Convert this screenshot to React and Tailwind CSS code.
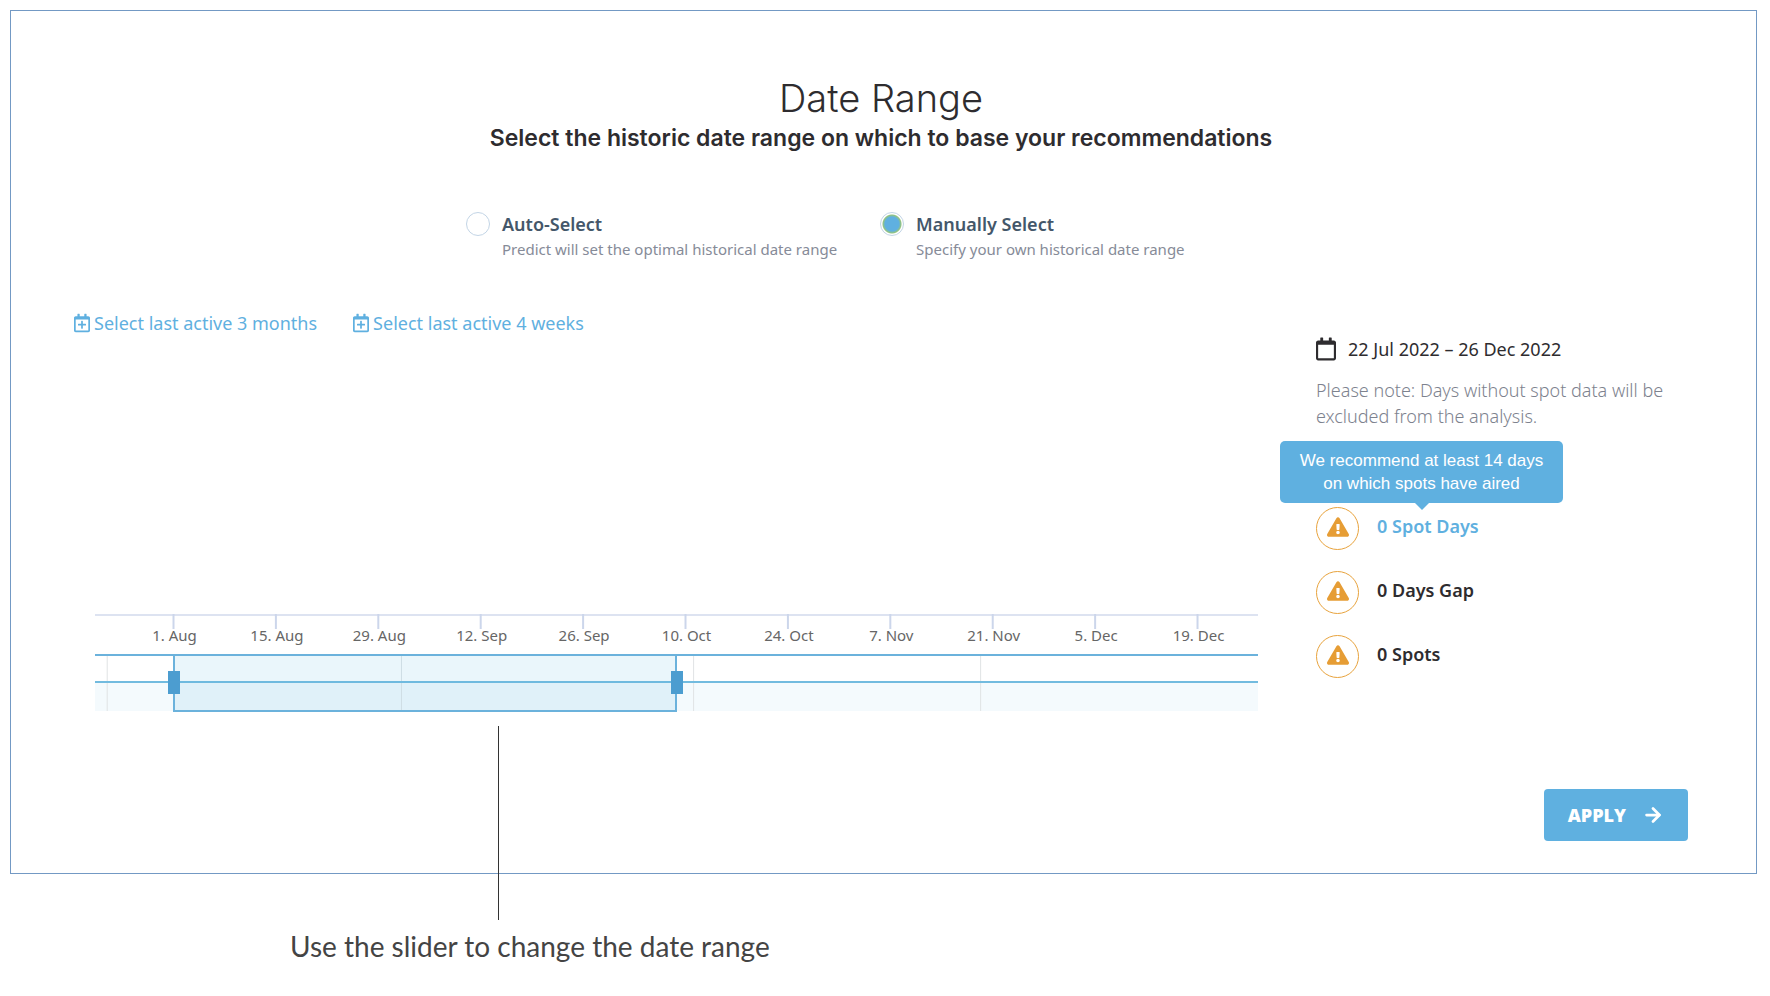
import React, { useState } from 'react';
import { ArrowRight } from 'lucide-react';
import { FaExclamationTriangle, FaRegCalendar, FaRegCalendarPlus } from 'react-icons/fa';

const MODES = [
  { id: 'auto', title: 'Auto-Select', text: 'Predict will set the optimal historical date range' },
  { id: 'manual', title: 'Manually Select', text: 'Specify your own historical date range' },
];

const TICKS = ['1. Aug', '15. Aug', '29. Aug', '12. Sep', '26. Sep', '10. Oct', '24. Oct', '7. Nov', '21. Nov', '5. Dec', '19. Dec'];

// month lines of the navigator, in percent of its width
const MONTHS = [1.05, 26.35, 51.47, 76.15];

const THUMB =
  'pointer-events-none absolute inset-x-0 top-0 h-[53px] w-full cursor-ew-resize appearance-none bg-transparent ' +
  '[&::-webkit-slider-thumb]:pointer-events-auto [&::-webkit-slider-thumb]:h-[23px] [&::-webkit-slider-thumb]:w-3 ' +
  '[&::-webkit-slider-thumb]:appearance-none [&::-webkit-slider-thumb]:rounded-none [&::-webkit-slider-thumb]:bg-[#4c9dd0]';

function ModeOption({ mode, checked, onChange }) {
  return (
    <label className="flex gap-3">
      <input
        type="radio"
        name="mode"
        checked={checked}
        onChange={onChange}
        className="h-6 w-6 shrink-0 appearance-none rounded-full border border-[#c3d5e6] bg-white checked:bg-[radial-gradient(circle,#5fb0e0_7px,#94c47d_9px,#ffffff_10px)]"
      />
      <span>
        <span className="block text-lg leading-6 font-semibold text-[#44576a]">{mode.title}</span>
        <span className="block text-[15px] leading-[26px] text-[#868b98]">{mode.text}</span>
      </span>
    </label>
  );
}

function QuickLink({ children }) {
  return (
    <button type="button" className="flex items-center gap-1 text-lg leading-6 text-[#5fb0e0]">
      <FaRegCalendarPlus className="h-5 w-4" /> {children}
    </button>
  );
}

function Axis() {
  return (
    <svg className="block h-10 w-full" aria-label="Dates">
      <line x1="0" x2="100%" y1="1" y2="1" stroke="#dde3f1" strokeWidth="2" />
      {TICKS.map((tick, i) => {
        const x = `${6.75 + i * 8.805}%`;
        return (
          <g key={tick}>
            <line x1={x} x2={x} y1="0" y2="15" stroke="#ccd6eb" strokeWidth="2" />
            <text x={x} dx="1" y="27" textAnchor="middle" fontSize="15" fill="#666666">{tick}</text>
          </g>
        );
      })}
    </svg>
  );
}

function Navigator() {
  const [from, setFrom] = useState(63);
  const [to, setTo] = useState(500);

  const at = (value) => `calc(5px + (100% - 12px) * ${value / 1000})`;

  return (
    <div className="relative h-[57px] border-t-2 border-[#6bb2dc]">
      <svg className="block h-full w-full">
        <rect x="0" y="27" width="100%" height="28" fill="#f4fafd" />
        {MONTHS.map((x) => (
          <line key={x} x1={`${x}%`} x2={`${x}%`} y1="0" y2="55" stroke="#e0e3e5" strokeWidth="1" />
        ))}
        <line x1="0" x2="100%" y1="26" y2="26" stroke="#72bbdf" strokeWidth="2" />
      </svg>
      <div
        className="absolute top-0 h-14 border-x-2 border-b-2 border-[#6bb2dc] bg-[#5bbbe0]/13"
        style={{ left: at(from), width: `calc(2px + (100% - 12px) * ${(to - from) / 1000})` }}
      />
      <input
        type="range"
        aria-label="Start date"
        min="0"
        max="1000"
        value={from}
        onChange={(e) => setFrom(Math.min(Number(e.target.value), to))}
        className={THUMB}
      />
      <input
        type="range"
        aria-label="End date"
        min="0"
        max="1000"
        value={to}
        onChange={(e) => setTo(Math.max(Number(e.target.value), from))}
        className={THUMB}
      />
    </div>
  );
}

function Warning({ children, active, tip }) {
  return (
    <li className="relative flex items-center gap-[18px]">
      <span className="flex h-[43px] w-[43px] items-center justify-center rounded-full border border-[#e8a33d] text-[#e69d35]">
        <FaExclamationTriangle className="mb-1 h-5 w-[22px]" />
      </span>
      <span className={active ? 'pb-1.5 text-lg leading-6 font-semibold text-[#5fb0e0]' : 'pb-1.5 text-lg leading-6 font-semibold text-[#2e2c2f]'}>
        {children}
      </span>
      {tip && (
        <div role="tooltip" className="absolute bottom-full -left-9 mb-1 w-[283px] rounded-[5px] bg-[#5fb0e0] px-4 py-2 text-center font-['Liberation_Sans',Arial,sans-serif] text-[17px] leading-[23px] text-white">
          {tip}
          <span className="absolute top-full left-1/2 -translate-x-1/2 border-x-[7px] border-t-[7px] border-x-transparent border-t-[#5fb0e0]" />
        </div>
      )}
    </li>
  );
}

export default function App() {
  const [mode, setMode] = useState('manual');

  return (
    <div className="min-h-screen bg-white py-[10px] pr-[13px] pl-[10px] font-['Noto_Sans',sans-serif] text-[#2e2c2f]">
      <main className="border border-[#7399c4] pt-[67px] pr-[68px] pb-8 pl-[63px]">
        <header className="text-center font-[Inter,sans-serif]">
          <h1 className="text-[38px] leading-10 font-light">Date Range</h1>
          <p className="mt-1.5 text-[23px] leading-7 font-semibold">Select the historic date range on which to base your recommendations</p>
        </header>

        <div className="mt-[60px] flex gap-[43px] pl-[392px]">
          {MODES.map((m) => (
            <ModeOption key={m.id} mode={m} checked={mode === m.id} onChange={() => setMode(m.id)} />
          ))}
        </div>

        <div className="mt-[49px] flex gap-[58px]">
          <section className="flex-1">
            <div className="flex gap-9">
              <QuickLink>Select last active 3 months</QuickLink>
              <QuickLink>Select last active 4 weeks</QuickLink>
            </div>
            <div className="mt-[279px] pl-[21px]">
              <Axis />
              <Navigator />
            </div>
          </section>

          <aside className="w-[372px] pt-[26px]">
            <div className="flex items-center gap-3 text-lg leading-6">
              <FaRegCalendar className="h-6 w-5" /> 22 Jul 2022 – 26 Dec 2022
            </div>
            <p className="mt-4 text-lg leading-[26px] font-light text-[#7d828e]">
              Please note: Days without spot data will be excluded from the analysis.
            </p>
            <ul className="mt-[78px] flex flex-col gap-[21px]">
              <Warning active tip={<>We recommend at least 14 days<br />on which spots have aired</>}>0 Spot Days</Warning>
              <Warning>0 Days Gap</Warning>
              <Warning>0 Spots</Warning>
            </ul>
          </aside>
        </div>

        <div className="mt-[78px] flex justify-end">
          <button type="button" className="flex h-[52px] items-center gap-4 rounded bg-[#5fb0e0] px-6 font-['Open_Sans',sans-serif] text-lg leading-6 font-extrabold text-white">
            APPLY <ArrowRight className="h-[22px] w-[22px]" strokeWidth={3} />
          </button>
        </div>
      </main>

      <div className="pointer-events-none relative -mt-[148px] w-fit pl-[280px]">
        <div className="ml-[208px] h-[194px] w-px bg-[#333333]" />
        <p className="mt-2 font-[Lato,sans-serif] text-[28px] leading-9 text-[#444444]">Use the slider to change the date range</p>
      </div>
    </div>
  );
}
